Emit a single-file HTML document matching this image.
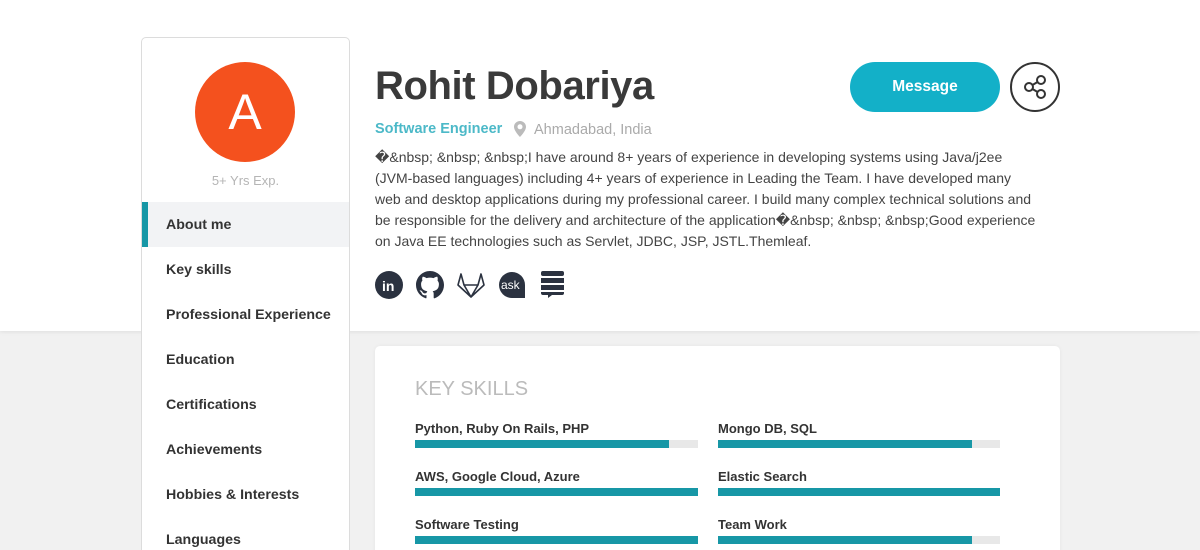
<!DOCTYPE html>
<html><head><meta charset="utf-8"><style>
*{margin:0;padding:0;box-sizing:border-box}
html,body{width:1200px;height:550px;overflow:hidden}
body{background:#f1f1f1;font-family:"Liberation Sans",sans-serif;position:relative}
.top{position:absolute;left:0;top:0;width:1200px;height:331px;background:#fff;box-shadow:0 1px 4px rgba(0,0,0,.08)}
.side{position:absolute;left:141px;top:37px;width:209px;height:540px;background:#fff;border:1px solid #dcdcdc;border-radius:5px}
.av{position:absolute;left:53px;top:24px;width:100px;height:100px;border-radius:50%;background:#f4511e;color:#fff;font-size:50px;text-align:center;line-height:100px}
.exp{position:absolute;top:135px;width:100%;text-align:center;font-size:13px;color:#b5b5b5}
.nav{position:absolute;top:164px;left:0;width:207px}
.nav div{height:45px;line-height:46px;padding-left:24px;font-size:14.2px;font-weight:bold;color:#333;white-space:nowrap}
.nav .act{background:#f2f3f5;border-left:6px solid #1797a6;padding-left:18px}
h1{position:absolute;left:375px;top:64px;font-size:40px;font-weight:bold;color:#3a3a3a;letter-spacing:-.4px}
.role{position:absolute;left:375px;top:121px;font-size:14.5px;color:#4cb9c8;font-weight:bold}
.loc{position:absolute;top:122px;font-size:14.5px;color:#aaa}
.desc{position:absolute;left:375px;top:147px;width:665px;font-size:14px;line-height:21px;color:#444}
.btn{position:absolute;left:850px;top:62px;width:150px;height:50px;border-radius:25px;background:#13b0c8;color:#fff;font-size:15.5px;font-weight:bold;text-align:center;line-height:50px}
.sh{position:absolute;left:1010px;top:62px;width:50px;height:50px;border-radius:50%;border:2px solid #333}
.icons{position:absolute;left:375px;top:271px}
.icons svg{position:absolute}
.card{position:absolute;left:375px;top:346px;width:685px;height:230px;background:#fff;border-radius:5px;box-shadow:0 0 4px rgba(0,0,0,.05)}
.ks{position:absolute;left:40px;top:32px;font-size:20px;color:#bbb}
.sk{position:absolute;width:283px;font-size:13px;font-weight:bold;color:#333}
.bar{margin-top:4px;height:8px;background:#e8e8e8}
.bar i{display:block;height:8px;background:#1797a6}
</style></head><body>
<div class="top"></div>
<div class="side">
<div class="av">A</div>
<div class="exp">5+ Yrs Exp.</div>
<div class="nav">
<div class="act">About me</div><div>Key skills</div><div>Professional Experience</div><div>Education</div><div>Certifications</div><div>Achievements</div><div>Hobbies &amp; Interests</div><div>Languages</div>
</div></div>
<h1>Rohit Dobariya</h1>
<div class="role">Software Engineer</div>
<svg style="position:absolute;left:514px;top:121px" width="12" height="16" viewBox="0 0 12 16"><path d="M6 0C2.7 0 0 2.6 0 5.8 0 10 6 16 6 16s6-6 6-10.2C12 2.6 9.3 0 6 0zm0 8.3a2.5 2.5 0 110-5 2.5 2.5 0 010 5z" fill="#bbb"/></svg>
<div class="loc" style="left:534px">Ahmadabad, India</div>
<div class="desc">&#xFFFD;&amp;nbsp; &amp;nbsp; &amp;nbsp;I have around 8+ years of experience in developing systems using Java/j2ee (JVM-based languages) including 4+ years of experience in Leading the Team. I have developed many web and desktop applications during my professional career. I build many complex technical solutions and be responsible for the delivery and architecture of the application&#xFFFD;&amp;nbsp; &amp;nbsp; &amp;nbsp;Good experience on Java EE technologies such as Servlet, JDBC, JSP, JSTL.Themleaf.</div>
<div class="btn">Message</div>
<div class="sh"><svg width="46" height="46" viewBox="0 0 46 46"><g fill="none" stroke="#333" stroke-width="2"><circle cx="29" cy="16" r="4"/><circle cx="17" cy="23" r="4"/><circle cx="29" cy="30" r="4"/><path d="M20.5 21l5-3M20.5 25l5 3"/></g></svg></div>
<div class="icons">
<svg width="28" height="28" style="left:0"><circle cx="14" cy="14" r="14" fill="#2b3240"/><text x="7" y="20" font-size="14" font-weight="bold" fill="#fff" font-family="Liberation Sans">in</text></svg>
<svg width="28" height="28" style="left:41px" viewBox="0 0 16 16"><path fill="#2b3240" d="M8 0C3.6 0 0 3.6 0 8c0 3.5 2.300 6.5 5.5 7.6.4.1.5-.2.5-.4v-1.4c-2.2.5-2.7-1-2.7-1-.4-.9-.9-1.200-.9-1.200-.7-.5.1-.5.1-.5.8.1 1.200.8 1.200.8.7 1.200 1.900.9 2.300.7.1-.5.3-.9.5-1.100-1.800-.2-3.600-.9-3.600-4 0-.9.3-1.600.8-2.100-.1-.2-.4-1 .1-2.100 0 0 .7-.2 2.200.8.6-.2 1.300-.3 2-.3s1.400.1 2 .3c1.500-1 2.200-.8 2.200-.8.4 1.100.2 1.900.1 2.100.5.6.8 1.300.8 2.100 0 3.100-1.900 3.800-3.600 4 .3.3.6.8.6 1.500v2.200c0 .2.1.5.6.4C13.700 14.500 16 11.500 16 8c0-4.400-3.600-8-8-8z"/></svg>
<svg width="30" height="28" style="left:81px" viewBox="0 0 30 28"><path fill="none" stroke="#2b3240" stroke-width="1.6" stroke-linejoin="round" d="M15 26L2 14l3-11 3 11h14l3-11 3 11zM8 14l7 12 7-12M2 14l13 12M28 14L15 26"/></svg>
<svg width="28" height="28" style="left:123px"><path d="M14 1a13 13 0 100 26h13V14A13 13 0 0014 1z" fill="#2b3240"/><text x="3" y="18" font-size="12" fill="#fff" font-family="Liberation Sans">ask</text></svg>
<svg width="26" height="30" style="left:165px;top:-2px"><g fill="#2b3240"><rect x="1" y="2" width="23" height="5" rx="2"/><rect x="1" y="9" width="23" height="5"/><rect x="1" y="16" width="23" height="5"/><path d="M1 23h23v1a2 2 0 01-2 2H12l-4 3v-3H3a2 2 0 01-2-2z"/></g></svg>
</div>
<div class="card">
<div class="ks">KEY SKILLS</div>
<div class="sk" style="left:40px;top:75px">Python, Ruby On Rails, PHP<div class="bar"><i style="width:254px"></i></div></div>
<div class="sk" style="left:343px;top:75px;width:282px">Mongo DB, SQL<div class="bar"><i style="width:254px"></i></div></div>
<div class="sk" style="left:40px;top:123px">AWS, Google Cloud, Azure<div class="bar"><i style="width:100%"></i></div></div>
<div class="sk" style="left:343px;top:123px;width:282px">Elastic Search<div class="bar"><i style="width:100%"></i></div></div>
<div class="sk" style="left:40px;top:171px">Software Testing<div class="bar"><i style="width:100%"></i></div></div>
<div class="sk" style="left:343px;top:171px;width:282px">Team Work<div class="bar"><i style="width:254px"></i></div></div>
</div>
</body></html>
